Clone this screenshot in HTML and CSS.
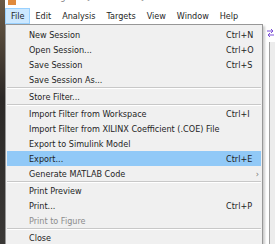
FILE: index.html
```html
<!DOCTYPE html>
<html lang="en">
<head>
    <meta charset="UTF-8">
    <title>Filter Designer - [untitled.fda*]</title>
    <link rel="stylesheet" href="styles.css">
</head>
<body>
    <div class="desktop">
        <div class="edge"></div>
        <div class="window">
            <div class="titlebar">
                <span class="app-icon"></span>
                <span class="title">Filter Designer - [untitled.fda*]</span>
            </div>
            <div class="menubar">
                <span class="menu open">File</span>
                <span class="menu">Edit</span>
                <span class="menu">Analysis</span>
                <span class="menu">Targets</span>
                <span class="menu">View</span>
                <span class="menu">Window</span>
                <span class="menu">Help</span>
            </div>
            <div class="content">
                <div class="toolbar">
                    <svg class="tool-icon" width="7" height="8" viewBox="0 0 7 8">
                        <path d="M0 2h6M4 0l2 2-2 2M7 6H1M3 4L1 6l2 2" fill="none" stroke="#7b4fd6" stroke-width="1"/>
                    </svg>
                </div>
                <div class="panel"></div>
            </div>

            <!-- File menu dropdown -->
            <div class="dropdown">
                <div class="item"><span>New Session</span><span class="key">Ctrl+N</span></div>
                <div class="item"><span>Open Session...</span><span class="key">Ctrl+O</span></div>
                <div class="item"><span>Save Session</span><span class="key">Ctrl+S</span></div>
                <div class="item"><span>Save Session As...</span></div>
                <div class="sep"></div>
                <div class="item"><span>Store Filter...</span></div>
                <div class="sep"></div>
                <div class="item"><span>Import Filter from Workspace</span><span class="key">Ctrl+I</span></div>
                <div class="item"><span>Import Filter from XILINX Coefficient (.COE) File</span></div>
                <div class="item"><span>Export to Simulink Model</span></div>
                <div class="item active"><span>Export...</span><span class="key">Ctrl+E</span></div>
                <div class="item"><span>Generate MATLAB Code</span><span class="arrow">&#8250;</span></div>
                <div class="sep"></div>
                <div class="item"><span>Print Preview</span></div>
                <div class="item"><span>Print...</span><span class="key">Ctrl+P</span></div>
                <div class="item disabled"><span>Print to Figure</span></div>
                <div class="sep"></div>
                <div class="item"><span>Close</span></div>
            </div>
        </div>
    </div>
</body>
</html>
```

FILE: styles.css
```css
body {
    margin: 0;
    width: 275px;
    height: 244px;
    overflow: hidden;
    background: #2e2a27;
    font-family: "DejaVu Sans Condensed", "DejaVu Sans", sans-serif;
    font-stretch: condensed;
    font-size: 9px;
    color: #1e1e1e;
}
.desktop {
    display: flex;
    height: 244px;
}
.edge {
    width: 5px;
    flex-shrink: 0;
    background: linear-gradient(#6b5a45, #2b2826 40%, #3a3836);
}
.window {
    position: relative;
    flex: 1;
    min-width: 0;
    background: #ffffff;
    display: flex;
    flex-direction: column;
}
.titlebar {
    height: 7px;
    overflow: hidden;
    display: flex;
    align-items: flex-end;
    gap: 4px;
    padding-left: 3px;
    color: #777;
}
.app-icon {
    width: 8px;
    height: 5px;
    background: #e08a3c;
    margin-bottom: 2px;
}
.title {
    line-height: 12px;
    margin-bottom: 4px;
}
.menubar {
    height: 16px;
    display: flex;
    align-items: stretch;
    padding-top: 1px;
}
.menu {
    display: flex;
    align-items: center;
    padding: 0 4px 0 5px;
    border: 1px solid transparent;
}
.menu.open {
    background: #cce8ff;
    border-color: #99d1ff;
}
.content {
    flex: 1;
    display: flex;
    flex-direction: column;
    align-items: flex-end;
}
.toolbar {
    width: 12px;
    height: 18px;
    display: flex;
    align-items: center;
    justify-content: flex-end;
    padding-right: 1px;
}
.panel {
    width: 5px;
    flex: 1;
    border-left: 1px solid #a0a0a0;
    background: #ececec;
}
.dropdown {
    position: absolute;
    left: 0;
    top: 24px;
    width: 256px;
    padding: 2px 0;
    background: #f0f0f0;
    border: 1px solid #979797;
    box-shadow: 2px 2px 2px rgba(0,0,0,0.2);
}
.item {
    display: grid;
    grid-template-columns: 1fr 28px;
    align-items: center;
    height: 15px;
    padding: 0 7px 0 22px;
    margin: 0 1px;
    white-space: nowrap;
}
.item.active {
    background: #91c9f7;
}
.item.disabled {
    color: #8c8c8c;
}
.arrow {
    justify-self: end;
    color: #777;
    margin-right: -5px;
}
.sep {
    height: 1px;
    margin: 0 1px;
    background: #c8c8c8;
    border-bottom: 1px solid #ffffff;
}
```
